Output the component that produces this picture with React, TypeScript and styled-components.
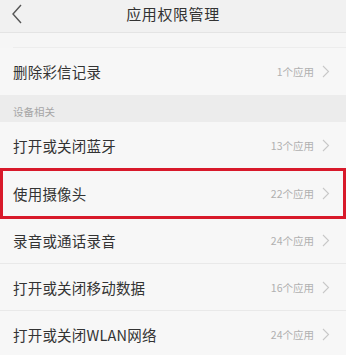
import React from "react"
import styled, { createGlobalStyle } from "styled-components"

const GlobalStyle = createGlobalStyle`
  html, body {
    margin: 0;
    padding: 0;
    background: #f6f6f6;
  }
  body {
    font-family: "Noto Sans CJK SC", "Noto Sans", "Liberation Sans", sans-serif;
    -webkit-font-smoothing: antialiased;
  }
`

type Item = { title: string; count: number; marked?: boolean }

const topItems: Item[] = [{ title: "删除彩信记录", count: 1 }]

const deviceItems: Item[] = [
  { title: "打开或关闭蓝牙", count: 13 },
  { title: "使用摄像头", count: 22, marked: true },
  { title: "录音或通话录音", count: 24 },
  { title: "打开或关闭移动数据", count: 16 },
  { title: "打开或关闭WLAN网络", count: 24 },
]

const Chevron: React.FC<{ left?: boolean }> = ({ left }) =>
  left ? (
    <svg width="12" height="20" viewBox="0 0 12 20">
      <path d="M10 1 L2 10 L10 19" fill="none" stroke="#555" strokeWidth="1.4" />
    </svg>
  ) : (
    <svg width="8" height="13" viewBox="0 0 8 13">
      <path d="M1 1 L6.5 6.5 L1 12" fill="none" stroke="#c8c8c8" strokeWidth="1.1" />
    </svg>
  )

const App: React.FC = () => {
  return (
    <Screen>
      <GlobalStyle />
      <Header>
        <BackButton>
          <Chevron left />
        </BackButton>
        <Title>应用权限管理</Title>
      </Header>

      <Spacer />

      <List>
        {topItems.map(item => (
          <Row key={item.title} first>
            <RowTitle>{item.title}</RowTitle>
            <RowMeta>
              {item.count}个应用
              <Chevron />
            </RowMeta>
          </Row>
        ))}
      </List>

      <SectionLabel>设备相关</SectionLabel>

      <List>
        {deviceItems.map((item, i) => (
          <Row key={item.title} first={i === 0} marked={item.marked}>
            <RowTitle>{item.title}</RowTitle>
            <RowMeta>
              {item.count}个应用
              <Chevron />
            </RowMeta>
          </Row>
        ))}
      </List>
    </Screen>
  )
}

const Screen = styled.div`
  width: 346px;
  height: 355px;
  overflow: hidden;
  background: #f6f6f6;
`

const Header = styled.header`
  height: 32px;
  display: flex;
  align-items: center;
  justify-content: center;
  position: relative;
  background: #f1f1f1;
  border-bottom: 1px solid #e4e4e4;
`

const BackButton = styled.div`
  position: absolute;
  left: 11px;
  top: 4px;
  display: flex;
`

const Title = styled.h1`
  margin: 0;
  font-size: 15px;
  font-weight: 400;
  color: #333;
  letter-spacing: 0.6px;
  line-height: 1;
  margin-top: -5px;
`

const Spacer = styled.div`
  height: 14px;
  border-bottom: 1px solid #ededed;
  margin-left: 13px;
`

const List = styled.div`
  display: flex;
  flex-direction: column;
  background: #f7f7f7;
`

const Row = styled.div<{ first?: boolean; marked?: boolean }>`
  position: relative;
  height: ${p => (p.first ? 47 : 46)}px;
  display: flex;
  align-items: center;
  justify-content: space-between;
  padding: 0 16px 0 13px;
  border-top: ${p => (p.first ? "none" : "1px solid #e9e9e9")};

  &::after {
    content: "";
    display: ${p => (p.marked ? "block" : "none")};
    position: absolute;
    left: 0;
    right: 0;
    top: -2px;
    bottom: -3px;
    border: 3px solid #d8192a;
    z-index: 2;
  }
`

const RowTitle = styled.span`
  font-size: 14.5px;
  color: #333;
  letter-spacing: 0.2px;
`

const RowMeta = styled.span`
  display: flex;
  align-items: center;
  gap: 8px;
  font-size: 10.5px;
  color: #b0b0b0;
`

const SectionLabel = styled.div`
  height: 27px;
  display: flex;
  align-items: center;
  padding: 5px 13px 0;
  box-sizing: border-box;
  background: #ececec;
  font-size: 10.5px;
  color: #a6a6a6;
`

export default App
